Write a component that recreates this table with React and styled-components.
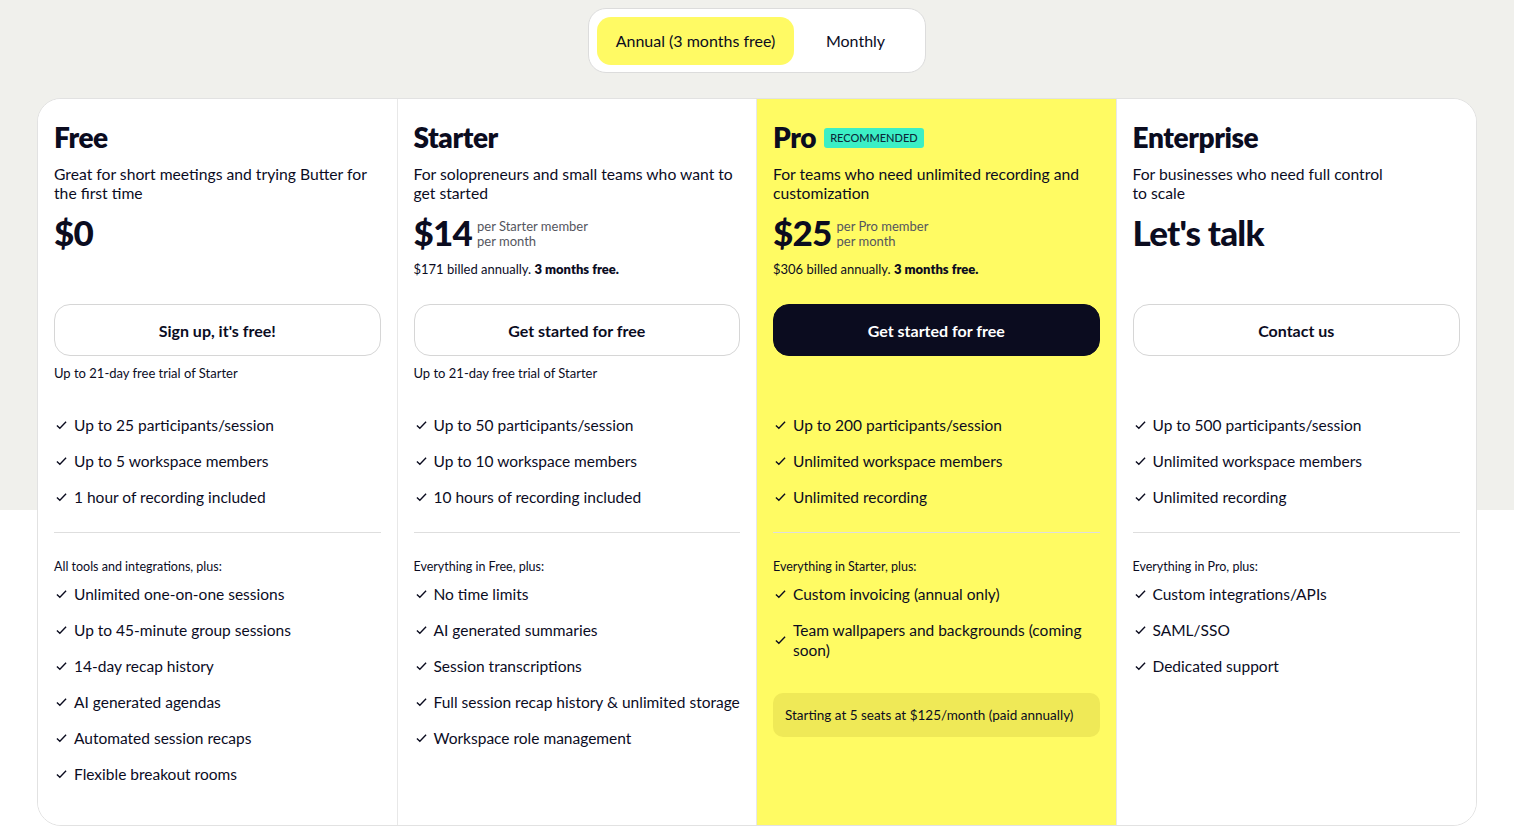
import styled, { createGlobalStyle } from 'styled-components';

const GlobalStyle = createGlobalStyle`
  body {
    margin: 0;
    font-family: Lato, "Open Sans", sans-serif;
    color: #0b0c1f;
    background: #fff;
  }
`;

const plans = [
  {
    name: 'Free',
    desc: ['Great for short meetings and trying Butter for the first time'],
    price: '$0',
    cta: "Sign up, it's free!",
    trial: 'Up to 21-day free trial of Starter',
    features: ['Up to 25 participants/session', 'Up to 5 workspace members', '1 hour of recording included'],
    extraTitle: 'All tools and integrations, plus:',
    extras: [
      'Unlimited one-on-one sessions',
      'Up to 45-minute group sessions',
      '14-day recap history',
      'AI generated agendas',
      'Automated session recaps',
      'Flexible breakout rooms',
    ],
  },
  {
    name: 'Starter',
    desc: ['For solopreneurs and small teams who want to get started'],
    price: '$14',
    per: ['per Starter member', 'per month'],
    billed: '$171 billed annually.',
    cta: 'Get started for free',
    trial: 'Up to 21-day free trial of Starter',
    features: ['Up to 50 participants/session', 'Up to 10 workspace members', '10 hours of recording included'],
    extraTitle: 'Everything in Free, plus:',
    extras: [
      'No time limits',
      'AI generated summaries',
      'Session transcriptions',
      'Full session recap history & unlimited storage',
      'Workspace role management',
    ],
  },
  {
    name: 'Pro',
    badge: 'RECOMMENDED',
    highlight: true,
    desc: ['For teams who need unlimited recording and customization'],
    price: '$25',
    per: ['per Pro member', 'per month'],
    billed: '$306 billed annually.',
    cta: 'Get started for free',
    features: ['Up to 200 participants/session', 'Unlimited workspace members', 'Unlimited recording'],
    extraTitle: 'Everything in Starter, plus:',
    extras: ['Custom invoicing (annual only)', 'Team wallpapers and backgrounds (coming soon)'],
    note: 'Starting at 5 seats at $125/month (paid annually)',
  },
  {
    name: 'Enterprise',
    desc: ['For businesses who need full control', 'to scale'],
    price: "Let's talk",
    cta: 'Contact us',
    features: ['Up to 500 participants/session', 'Unlimited workspace members', 'Unlimited recording'],
    extraTitle: 'Everything in Pro, plus:',
    extras: ['Custom integrations/APIs', 'SAML/SSO', 'Dedicated support'],
  },
];

function Check() {
  return (
    <CheckIcon viewBox="0 0 12 10" aria-hidden="true">
      <polyline points="1,5.5 4.2,8.6 11,1.4" />
    </CheckIcon>
  );
}

function Feature({ children }) {
  return (
    <FeatureItem>
      <Check />
      <span>{children}</span>
    </FeatureItem>
  );
}

function PlanColumn({ plan }) {
  return (
    <Column $highlight={plan.highlight}>
      <Header>
        <TitleRow>
          <Title>{plan.name}</Title>
          {plan.badge && <Badge>{plan.badge}</Badge>}
        </TitleRow>
        <Desc>
          {plan.desc.map((line, i) => (
            <span key={i}>
              {line}
              {i < plan.desc.length - 1 && <br />}
            </span>
          ))}
        </Desc>
        <PriceRow>
          <Price>{plan.price}</Price>
          {plan.per && (
            <Per>
              <span>{plan.per[0]}</span>
              <span>{plan.per[1]}</span>
            </Per>
          )}
        </PriceRow>
        {plan.billed && (
          <Billed>
            {plan.billed} <b>3 months free.</b>
          </Billed>
        )}
      </Header>

      <CtaButton $dark={plan.highlight}>{plan.cta}</CtaButton>
      <Trial>{plan.trial}</Trial>

      <FeatureList>
        {plan.features.map((f) => (
          <Feature key={f}>{f}</Feature>
        ))}
      </FeatureList>

      <Divider />

      <ExtraTitle>{plan.extraTitle}</ExtraTitle>
      <FeatureList>
        {plan.extras.map((f) => (
          <Feature key={f}>{f}</Feature>
        ))}
      </FeatureList>

      {plan.note && <Note>{plan.note}</Note>}
    </Column>
  );
}

export default function App() {
  return (
    <Page>
      <GlobalStyle />
      <Toggle>
        <ToggleOption $active>Annual (3 months free)</ToggleOption>
        <ToggleOption>Monthly</ToggleOption>
      </Toggle>
      <Card>
        {plans.map((plan) => (
          <PlanColumn key={plan.name} plan={plan} />
        ))}
      </Card>
    </Page>
  );
}

const Page = styled.div`
  min-height: 829px;
  padding-top: 8px;
  box-sizing: border-box;
  display: flex;
  flex-direction: column;
  align-items: center;
  background: linear-gradient(#f0f0ec 0, #f0f0ec 510px, #fff 510px);
`;

const Toggle = styled.div`
  display: flex;
  align-items: center;
  width: 338px;
  height: 65px;
  box-sizing: border-box;
  padding: 8px;
  background: #fff;
  border: 1px solid #dcdcdc;
  border-radius: 18px;
`;

const ToggleOption = styled.div`
  height: 48px;
  display: flex;
  align-items: center;
  justify-content: center;
  border-radius: 14px;
  font-size: 16px;
  color: #0b0c1f;
  width: ${(p) => (p.$active ? '197px' : 'auto')};
  flex: ${(p) => (p.$active ? 'none' : '1')};
  background: ${(p) => (p.$active ? '#fffa64' : 'transparent')};
`;

const Card = styled.div`
  margin-top: 25px;
  width: 1440px;
  height: 728px;
  box-sizing: border-box;
  display: grid;
  grid-template-columns: repeat(4, 1fr);
  background: #fff;
  border: 1px solid #e2e2e2;
  border-radius: 24px;
  overflow: hidden;
`;

const Column = styled.div`
  display: flex;
  flex-direction: column;
  padding: 21px 16px 0 16px;
  background: ${(p) => (p.$highlight ? '#fffb63' : '#fff')};
  border-right: 1px solid #e8e8e8;

  &:last-child {
    border-right: none;
  }
`;

const Header = styled.div`
  min-height: 184px;
`;

const TitleRow = styled.div`
  display: flex;
  align-items: center;
  gap: 8px;
  height: 34px;
`;

const Title = styled.h2`
  margin: 0;
  font-size: 28px;
  font-weight: 800;
  letter-spacing: -0.4px;
  line-height: 34px;
`;

const Badge = styled.span`
  background: #3cefc5;
  color: #0b2a3a;
  font-size: 11px;
  font-weight: 500;
  padding: 3px 6px;
  border-radius: 3px;
  line-height: 14px;
  margin-top: 1px;
`;

const Desc = styled.p`
  margin: 11px 0 0;
  font-size: 15.7px;
  line-height: 19px;
`;

const PriceRow = styled.div`
  margin-top: 9px;
  display: flex;
  align-items: center;
  gap: 5px;
  height: 40px;
`;

const Price = styled.div`
  font-size: 35px;
  font-weight: 900;
  letter-spacing: -0.8px;
  line-height: 40px;
`;

const Per = styled.div`
  display: flex;
  flex-direction: column;
  margin-top: 3px;
  font-size: 13px;
  line-height: 15px;
  color: #55565e;
`;

const Billed = styled.div`
  margin-top: 9px;
  font-size: 13px;
  line-height: 16px;

  b {
    font-weight: 800;
  }
`;

const CtaButton = styled.button`
  height: 52px;
  width: 100%;
  border-radius: 16px;
  font-family: inherit;
  font-size: 16px;
  font-weight: 700;
  cursor: pointer;
  border: 1px solid ${(p) => (p.$dark ? '#0b0c1f' : '#d6d6d6')};
  background: ${(p) => (p.$dark ? '#0b0c1f' : '#fff')};
  color: ${(p) => (p.$dark ? '#fff' : '#0b0c1f')};
`;

const Trial = styled.div`
  margin-top: 9px;
  height: 16px;
  font-size: 13px;
  line-height: 16px;
`;

const FeatureList = styled.ul`
  list-style: none;
  margin: 0;
  padding: 0;
  display: flex;
  flex-direction: column;
  gap: 16px;

  ${Trial} + & {
    margin-top: 34px;
  }
`;

const FeatureItem = styled.li`
  display: flex;
  align-items: center;
  gap: 7px;
  font-size: 15.5px;
  line-height: 20px;
  padding-left: 2px;
`;

const CheckIcon = styled.svg`
  flex: none;
  width: 11px;
  height: 10px;
  fill: none;
  stroke: #0b0c1f;
  stroke-width: 1.5;
`;

const Divider = styled.hr`
  margin: 25px 0 0;
  border: none;
  border-top: 1px solid #dedede;
`;

const ExtraTitle = styled.div`
  margin: 26px 0 9px;
  font-size: 12.5px;
  line-height: 16px;
`;

const Note = styled.div`
  margin-top: 33px;
  height: 44px;
  display: flex;
  align-items: center;
  padding: 0 12px;
  border-radius: 10px;
  background: #efe957;
  font-size: 13.5px;
`;
